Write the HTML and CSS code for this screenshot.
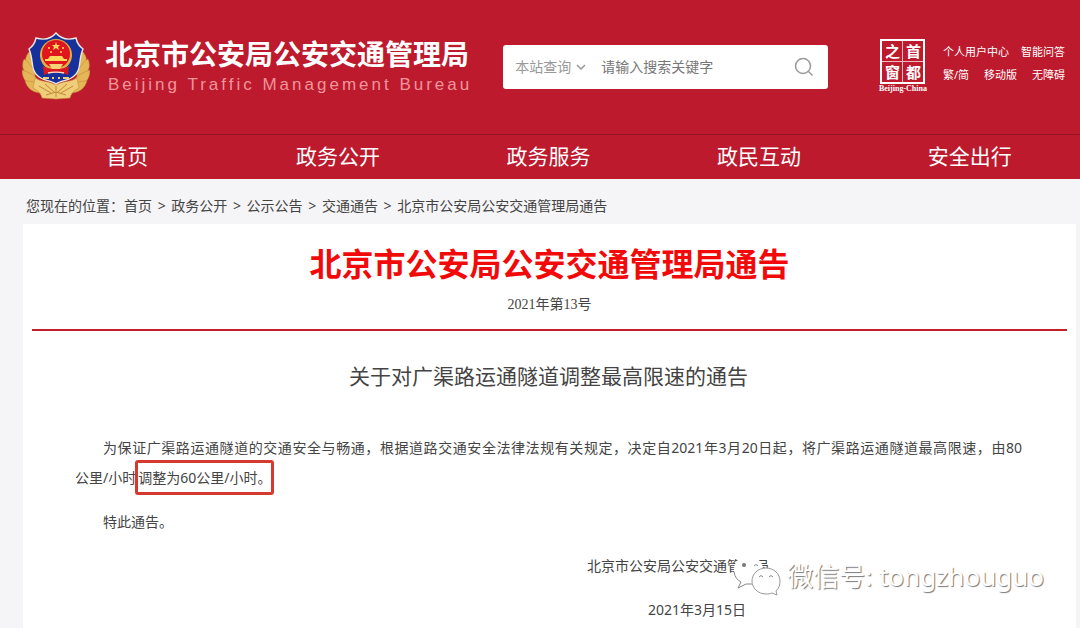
FILE: index.html
```html
<!doctype html>
<html lang="zh-CN">
  <head>
    <meta charset="UTF-8" />
    <meta name="viewport" content="width=device-width, initial-scale=1.0" />
    <title>北京市公安局公安交通管理局通告</title>
    <link rel="stylesheet" href="styles.css">
  </head>
  <body>
    <header class="site-header">
      <a class="brand" href="#">
        <svg class="emblem" viewBox="0 0 68 68" aria-hidden="true">
          <g fill="#e5b658" stroke="#b98130" stroke-width="0.5">
            <path d="M8 19C2 25 2 32 8 38C13 32 13 25 8 19Z" />
            <path d="M2 27C-2 36 3 44 13 47C14 39 9 32 2 27Z" />
            <path d="M0 38C0 49 7 55 19 55C18 47 10 41 0 38Z" />
            <path d="M3 49C6 59 15 63 27 60C23 53 13 49 3 49Z" />
            <path d="M60 19C66 25 66 32 60 38C55 32 55 25 60 19Z" />
            <path d="M66 27C70 36 65 44 55 47C54 39 59 32 66 27Z" />
            <path d="M68 38C68 49 61 55 49 55C50 47 58 41 68 38Z" />
            <path d="M65 49C62 59 53 63 41 60C45 53 55 49 65 49Z" />
          </g>
          <path d="M13 46C19 50 27 49 34 53C41 49 49 50 55 46L57 56C51 59 49 62 48 66L34 67L20 66C19 62 17 59 11 56Z" fill="#f0cd79" stroke="#c38e39" stroke-width="0.6" />
          <path d="M17 54L29 61M23 52L32 60M51 54L39 61M45 52L36 60M24 63L34 60L44 63M34 54V65" stroke="#c08b38" fill="none" />
          <path d="M34 1C29 7 21 8 14 6C13 11 11 14 7 17C12 28 8 38 16 44C21 49 29 48 34 52C39 48 47 49 52 44C60 38 56 28 61 17C57 14 55 11 54 6C47 8 39 7 34 1Z" fill="#16319b" stroke="#efe8dc" stroke-width="1.4" />
          <circle cx="34" cy="23" r="16" fill="#e4ae42" />
          <circle cx="34" cy="22" r="14" fill="#e0161e" />
          <path d="M34 10L35 13H38L36 15L37 18L34 16L31 18L32 15L30 13H33Z" fill="#ffd95b" />
          <g fill="#ffd95b">
            <circle cx="27" cy="16" r="1" />
            <circle cx="41" cy="16" r="1" />
            <circle cx="29" cy="20" r="1" />
            <circle cx="39" cy="20" r="1" />
          </g>
          <path d="M23 29V27H26L28 24H40L42 27H45V29Z" fill="#ffd95b" />
          <path d="M21 34C27 38 41 38 47 34L46 43C41 40 27 40 22 43Z" fill="#d71820" />
          <path d="M27 32H41L38 37H30Z" fill="#f5d177" />
          <path d="M26 41C30 40 38 40 42 41" fill="none" stroke="#f5e2cf" stroke-width="1.5" />
          <path d="M21 46H27M30 46H32M36 46H38M41 46H47" stroke="#e9cd78" stroke-width="2" />
        </svg>
        <span class="brand-text">
          <strong>北京市公安局公安交通管理局</strong>
          <span lang="en">Beijing Traffic Management Bureau</span>
        </span>
      </a>

      <form class="search" role="search">
        <select aria-label="查询范围">
          <option>本站查询</option>
        </select>
        <input type="text" aria-label="搜索关键字" placeholder="请输入搜索关键字" />
        <button type="button" aria-label="搜索">
          <svg viewBox="0 0 20 20" aria-hidden="true">
            <circle cx="9" cy="9" r="7.5" />
            <path d="M14.5 14.5L18.5 18.5" />
          </svg>
        </button>
      </form>

      <div class="tools">
        <a class="capital" href="#">
          <span class="seal"><b>之</b><b>首</b><b>窗</b><b>都</b></span>
          <span class="capital-name" lang="en">Beijing-China</span>
        </a>
        <div class="links">
          <div class="links-row"><a href="#">个人用户中心</a><a href="#">智能问答</a></div>
          <div class="links-row"><a href="#">繁/简</a><a href="#">移动版</a><a href="#">无障碍</a></div>
        </div>
      </div>
    </header>

    <nav class="main-nav">
      <a href="#">首页</a>
      <a href="#">政务公开</a>
      <a href="#">政务服务</a>
      <a href="#">政民互动</a>
      <a href="#">安全出行</a>
    </nav>

    <div class="breadcrumb">
      您现在的位置：<a href="#">首页</a> <i>&gt;</i> <a href="#">政务公开</a> <i>&gt;</i> <a href="#">公示公告</a> <i>&gt;</i> <a href="#">交通通告</a> <i>&gt;</i> <a href="#">北京市公安局公安交通管理局通告</a>
    </div>

    <main class="notice">
      <div class="notice-head">
        <h1>北京市公安局公安交通管理局通告</h1>
        <p>2021年第13号</p>
      </div>
      <article>
        <h2>关于对广渠路运通隧道调整最高限速的通告</h2>
        <p>为保证广渠路运通隧道的交通安全与畅通，根据道路交通安全法律法规有关规定，决定自2021年3月20日起，将广渠路运通隧道最高限速，由80<span class="unit">公里/小时</span><mark>调整为60公里/小时。</mark></p>
        <p>特此通告。</p>
        <div class="signature">
          <p>北京市公安局公安交通管理局</p>
          <p class="date">2021年3月15日</p>
        </div>
      </article>
      <div class="watermark">
        <svg viewBox="0 0 48 40" aria-hidden="true">
          <path class="bubble-back" d="M15 0C7 0 1 6 1 13C1 19 4 23 8 26L7 32L14 28C25 29 30 22 30 13C30 6 24 0 15 0Z" />
          <path d="M1 16C2 21 4 24 8 26L5 32L13 28H19" />
          <path class="bubble-front" d="M33 12C25 12 19 18 19 25C19 32 25 38 33 38C35 38 37 38 39 37L44 39L43 35C46 32 47 29 47 25C47 18 41 12 33 12Z" />
          <path d="M26 21Q28 18 30 21M36 21Q38 18 40 21" />
          <circle class="eye" cx="11" cy="9" r="2" />
          <path d="M21 10Q23 7 25 10" />
        </svg>
        <span>微信号: tongzhouguo</span>
      </div>
    </main>
  </body>
</html>
```

FILE: styles.css
```css
* {
  box-sizing: border-box;
}

body {
  display: flex;
  flex-direction: column;
  min-height: 100vh;
  margin: 0;
  background: #f5f4f6;
  color: #444;
  font: 14px/30px "Noto Sans", "Noto Sans CJK SC", sans-serif;
}

a {
  color: inherit;
  text-decoration: none;
}

h1,
h2,
p {
  margin: 0;
}

/* Header */
.site-header {
  display: flex;
  align-items: center;
  height: 134px;
  padding: 0 15px 2px 22px;
  background: #bd1a2d;
  color: #fff;
}

.brand {
  display: flex;
  align-items: center;
  gap: 15px;
}

.emblem {
  width: 68px;
  height: 68px;
}

.brand-text {
  display: flex;
  flex-direction: column;
  gap: 6px;

  strong {
    font: bold 28px/32px "Noto Sans CJK SC", sans-serif;
  }

  span {
    padding-left: 3px;
    color: #f0959c;
    font: 17px/20px "Liberation Sans", sans-serif;
    letter-spacing: 3px;
    white-space: nowrap;
  }
}

.search {
  display: flex;
  flex: 0 1 325px;
  align-items: center;
  min-width: 0;
  height: 44px;
  margin: 2px 0 0 31px;
  padding: 0 12px;
  border-radius: 3px;
  background: #fff;

  select {
    appearance: none;
    flex: none;
    width: 74px;
    padding: 0;
    border: 0;
    background: url("data:image/svg+xml,%3Csvg xmlns='http://www.w3.org/2000/svg' width='10' height='6' fill='none' stroke='%23999' stroke-width='1.5'%3E%3Cpath d='M1 1l4 4 4-4'/%3E%3C/svg%3E") no-repeat right 3px center;
    color: #999;
    font: inherit;
  }

  input {
    flex: 1;
    width: 0;
    padding: 0 12px;
    border: 0;
    background: none;
    font: inherit;

    &::placeholder {
      color: #777;
    }
  }

  button {
    flex: none;
    width: 24px;
    height: 24px;
    padding: 2px;
    border: 0;
    background: none;
  }

  svg {
    display: block;
    fill: none;
    stroke: #999;
    stroke-width: 1.5;
  }
}

.tools {
  display: flex;
  gap: 16px;
  margin-left: auto;
}

.capital {
  display: flex;
  flex-direction: column;
  align-items: center;
}

.seal {
  display: grid;
  grid-template-columns: 1fr 1fr;
  gap: 1px;
  width: 45px;
  border: 2px solid #fff;
  background: #f2b9be;

  b {
    background: #bd1a2d;
    font: bold 15px/20px "Noto Sans CJK SC", sans-serif;
    text-align: center;
  }
}

.capital-name {
  font: bold 8px/9px "Liberation Serif", serif;
}

.links {
  padding-top: 1px;
  font-size: 11px;
  line-height: 23px;
}

.links-row {
  display: flex;
  justify-content: space-between;
  gap: 12px;
}

/* Navigation */
.main-nav {
  display: flex;
  padding: 0 5px 2px 22px;
  border-top: 1px solid #941323;
  background: #bd1a2d;

  a {
    flex: 1;
    color: #fff;
    font-size: 21px;
    line-height: 42px;
    text-align: center;
  }
}

.breadcrumb {
  padding: 12px 26px 3px;

  i {
    margin: 0 2px;
    font-style: normal;
  }
}

/* Notice */
.notice {
  position: relative;
  flex: 1;
  margin: 0 4px 0 23px;
  padding: 0 9px;
  background: #fff;
}

.notice-head {
  padding: 16px 0 3px;
  border-bottom: 2px solid #c4202c;
  text-align: center;

  h1 {
    color: #f20a0a;
    font: bold 32px/44px "Noto Sans CJK SC", sans-serif;
  }

  p {
    line-height: 42px;
    font-family: "Liberation Serif", "Noto Sans CJK SC", serif;
  }
}

article {
  padding: 30px 45px 0 43px;

  h2 {
    margin-bottom: 42px;
    font-size: 21px;
    font-weight: normal;
    text-align: center;
  }

  p {
    margin-bottom: 14px;
    text-align: justify;
    text-indent: 2em;
  }
}

.unit {
  white-space: nowrap;
}

mark {
  padding: 7px 2px;
  border-radius: 2px;
  outline: 3px solid #d63a2f;
  outline-offset: -2px;
  background: none;
  color: inherit;
}

.signature {
  width: 188px;
  margin-left: auto;
  margin-right: 247px;

  p {
    text-indent: 0;
    white-space: nowrap;
  }

  .date {
    margin: 0;
    padding-left: 32px;
    text-align: center;
  }
}

.watermark {
  display: flex;
  position: absolute;
  right: 32px;
  bottom: 32px;
  align-items: center;
  gap: 6px;
  color: #fff;
  font-size: 26px;
  line-height: 40px;
  text-shadow: 1px 1px 1px #777;

  svg {
    width: 48px;
    height: 40px;
    fill: none;
    stroke: #888;
  }

  .bubble-back {
    fill: #fff;
    stroke: none;
  }

  .bubble-front {
    fill: #fff;
    stroke: #999;
  }

  .eye {
    fill: #777;
    stroke: none;
  }
}
```
